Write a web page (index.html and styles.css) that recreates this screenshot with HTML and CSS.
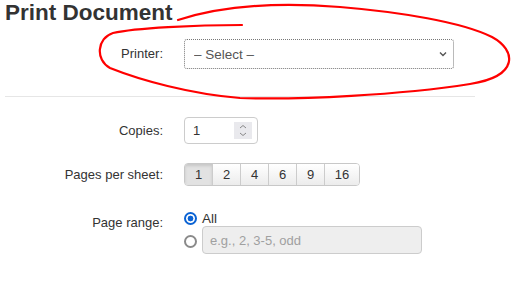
FILE: index.html
```html
<!DOCTYPE html>
<html lang="en">
<head>
    <meta charset="UTF-8">
    <meta name="viewport" content="width=device-width, initial-scale=1.0">
    <title>Print Document</title>
    <link rel="stylesheet" href="styles.css">
</head>
<body>
    <div class="page">
        <h1>Print Document</h1>
        <form class="form">
            <div class="row printerRow">
                <label class="label" for="printer">Printer:</label>
                <div class="selectBox">
                    <select id="printer" class="select">
                        <option>&ndash; Select &ndash;</option>
                    </select>
                    <svg class="chevron" width="8" height="6" viewBox="0 0 8 6">
                        <path d="M1 1.5 L4 4.5 L7 1.5" fill="none" stroke="#555" stroke-width="1.4"/>
                    </svg>
                </div>
            </div>
            <hr class="divider">
            <div class="row copiesRow">
                <label class="label" for="copies">Copies:</label>
                <div class="numberBox">
                    <input type="text" id="copies" class="number" value="1">
                    <span class="spinner">
                        <svg width="18" height="17" viewBox="0 0 18 17">
                            <path d="M6 6 L9 3.5 L12 6" fill="none" stroke="#888" stroke-width="1"/>
                            <path d="M6 11 L9 13.5 L12 11" fill="none" stroke="#888" stroke-width="1"/>
                        </svg>
                    </span>
                </div>
            </div>
            <div class="row pagesRow">
                <span class="label">Pages per sheet:</span>
                <div class="btnGroup">
                    <button type="button" class="btn active">1</button>
                    <button type="button" class="btn">2</button>
                    <button type="button" class="btn">4</button>
                    <button type="button" class="btn">6</button>
                    <button type="button" class="btn">9</button>
                    <button type="button" class="btn wide">16</button>
                </div>
            </div>
            <div class="row rangeRow">
                <span class="label rangeLabel">Page range:</span>
                <div class="rangeOptions">
                    <label class="option">
                        <input type="radio" name="range" class="radio" checked>
                        <span>All</span>
                    </label>
                    <div class="option">
                        <input type="radio" name="range" class="radio">
                        <input type="text" class="rangeInput" placeholder="e.g., 2, 3-5, odd" disabled>
                    </div>
                </div>
            </div>
        </form>

        <!-- hand drawn marker around the printer field -->
        <svg class="scribble" width="514" height="110" viewBox="0 0 514 110">
            <path d="M242,25 C195,25 135,28 113,33 C97,38 95,60 110,68 C140,80 190,94 240,98 C300,100 400,95 470,84 C520,76 516,50 492,37 C462,22 400,12 340,7 C290,3 230,3 178,20"
                  fill="none" stroke="#f00" stroke-width="2.2" stroke-linecap="round"/>
        </svg>
    </div>
</body>
</html>
```

FILE: styles.css
```css
body {
    margin: 0;
    color: #333;
    background-color: #fff;
    font-family: "Liberation Sans", Arial, sans-serif;
    font-size: 13px;
}
.page {
    position: relative;
    padding: 0 5px;
}
h1 {
    margin: 0;
    font-size: 22.5px;
    line-height: 25px;
    font-weight: bold;
    color: #333;
}
.row {
    display: flex;
    align-items: center;
}
.label {
    width: 158px;
    margin-right: 21px;
    text-align: right;
    font-size: 13px;
    line-height: 16px;
    color: #333;
}
.printerRow {
    margin-top: 14px;
}
.selectBox {
    display: flex;
    align-items: center;
    width: 270px;
    height: 30px;
    box-sizing: border-box;
    border: 1px dotted #777;
    border-radius: 3px;
    background-color: #fff;
}
.select {
    flex: 1;
    height: 100%;
    padding: 0 0 0 9px;
    border: none;
    outline: none;
    background: transparent;
    appearance: none;
    -webkit-appearance: none;
    font-family: "Liberation Sans", Arial, sans-serif;
    font-size: 13.5px;
    color: #555;
}
.chevron {
    margin-right: 6px;
}
.divider {
    width: 470px;
    margin: 27px 0 0;
    border: none;
    border-top: 1px solid #e6e6e6;
}
.copiesRow {
    margin-top: 20px;
}
.numberBox {
    display: flex;
    align-items: center;
    width: 74px;
    height: 27px;
    box-sizing: border-box;
    border: 1px solid #ccc;
    border-radius: 4px;
    background-color: #fff;
}
.number {
    width: 30px;
    flex: 1;
    padding: 0 0 0 8px;
    border: none;
    outline: none;
    font-family: "Liberation Sans", Arial, sans-serif;
    font-size: 13px;
    color: #333;
}
.spinner {
    display: flex;
    width: 18px;
    height: 17px;
    margin-right: 5px;
    background-color: #e9e9ed;
}
.pagesRow {
    margin-top: 19px;
}
.btnGroup {
    display: flex;
    border: 1px solid #c8c8c8;
    border-radius: 4px;
    overflow: hidden;
}
.btn {
    width: 28px;
    height: 21px;
    padding: 0;
    border: none;
    border-right: 1px solid #ccc;
    background: linear-gradient(#fff, #ececec);
    font-family: "Liberation Sans", Arial, sans-serif;
    font-size: 13px;
    color: #333;
}
.btn.wide {
    width: 34px;
    border-right: none;
}
.btn.active {
    background: #e2e2e2;
    box-shadow: inset 0 2px 3px rgba(0, 0, 0, 0.12);
}
.rangeRow {
    align-items: flex-start;
    margin-top: 25px;
}
.rangeLabel {
    padding-top: 4px;
}
.rangeOptions {
    display: flex;
    flex-direction: column;
}
.option {
    display: flex;
    align-items: center;
    font-size: 13.5px;
}
.radio {
    appearance: none;
    -webkit-appearance: none;
    width: 13px;
    height: 13px;
    margin: 0 5px 0 0;
    box-sizing: border-box;
    border: 2px solid #8a8a8a;
    border-radius: 50%;
    background-color: #fff;
}
.radio:checked {
    border-color: #0b63d4;
    background: radial-gradient(circle, #0b63d4 0, #0b63d4 2.6px, #fff 3.2px);
}
.option + .option .radio {
    margin-top: 3px;
}
.rangeInput {
    width: 220px;
    height: 28px;
    box-sizing: border-box;
    padding: 0 7px;
    border: 1px solid #ccc;
    border-radius: 4px;
    background-color: #eee;
    font-family: "Liberation Sans", Arial, sans-serif;
    font-size: 13px;
}
.rangeInput::placeholder {
    color: #a0a0a0;
}
.scribble {
    position: absolute;
    top: 0;
    left: 0;
    pointer-events: none;
}
```
